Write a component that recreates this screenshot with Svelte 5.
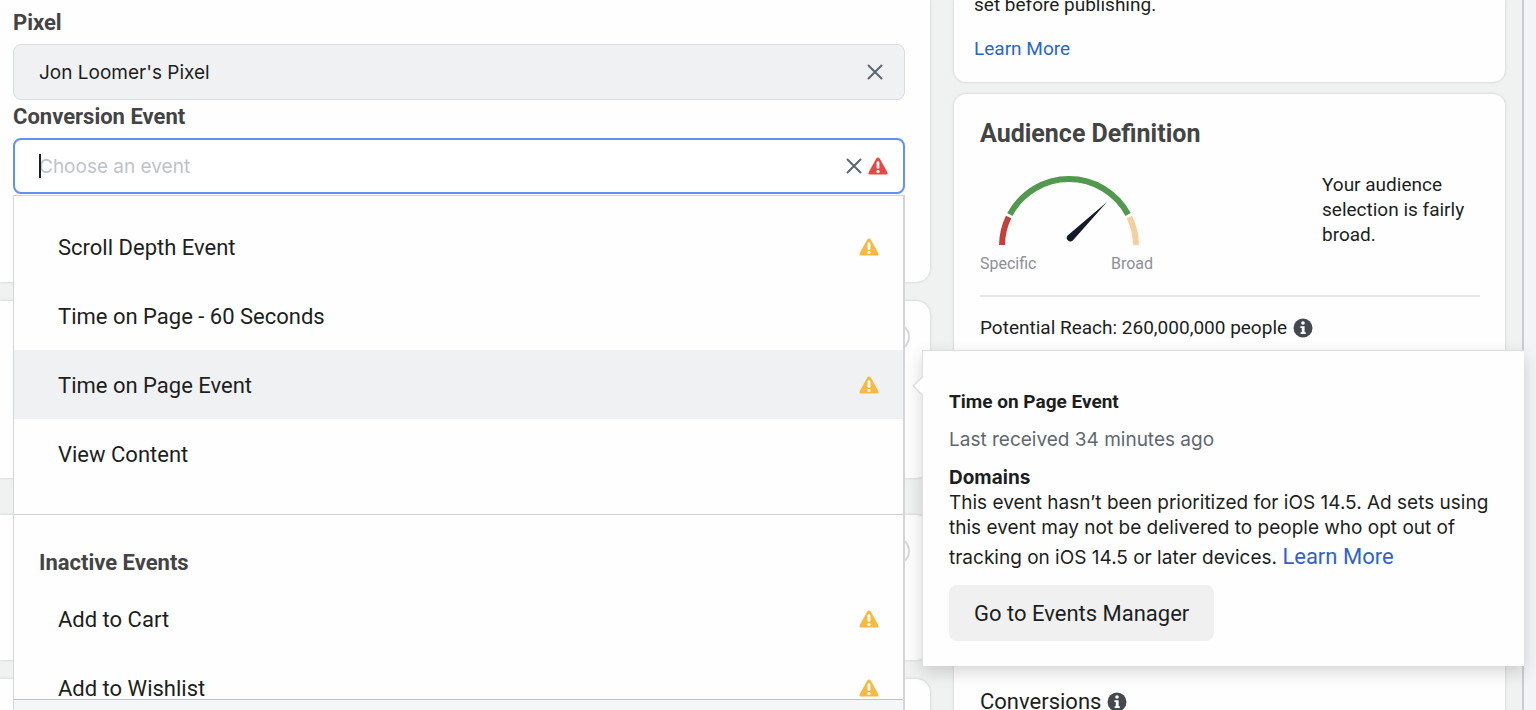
<script>
  const activeEvents = [
    { name: 'Scroll Depth Event', warning: true },
    { name: 'Time on Page - 60 Seconds', warning: false },
    { name: 'Time on Page Event', warning: true },
    { name: 'View Content', warning: false }
  ];
  const inactiveEvents = [
    { name: 'Add to Cart', warning: true },
    { name: 'Add to Wishlist', warning: true }
  ];
  let highlighted = $state('Time on Page Event');
  let query = $state('');
  let pixel = $state("Jon Loomer's Pixel");
</script>

{#snippet cross()}
  <svg width="16" height="16" viewBox="0 0 16 16" aria-hidden="true">
    <path d="M1.5 1.5 14.5 14.5M14.5 1.5 1.5 14.5" fill="none" stroke="#5f666e" stroke-width="2" stroke-linecap="round" />
  </svg>
{/snippet}

{#snippet alertIcon(color)}
  <svg width="20" height="18" viewBox="0 0 20 18" aria-hidden="true">
    <path d="M8.1 1.7Q10 -.9 11.9 1.7L19.2 14.9Q20.2 17.4 17.9 17.5H2.1Q-.2 17.4 .8 14.9Z" fill={color} />
    <path d="M10 5.7V10.4" stroke="#fff" stroke-width="2.8" stroke-linecap="round" />
    <circle cx="10" cy="14.4" r="1.6" fill="#fff" />
  </svg>
{/snippet}

{#snippet info()}
  <svg width="20" height="20" viewBox="0 0 20 20" aria-hidden="true">
    <circle cx="10" cy="10" r="9.5" fill="#444950" />
    <circle cx="10" cy="5" r="1.8" fill="#fff" />
    <path d="M7.4 8.2H11.6V14.2H12.8V16H7.6V14.2H8.8V10H7.4Z" fill="#fff" />
  </svg>
{/snippet}

{#snippet option(event)}
  <li>
    <button
      class="option"
      class:highlighted={event.name === highlighted}
      onmouseenter={() => (highlighted = event.name)}
    >
      <span>{event.name}</span>
      {#if event.warning}{@render alertIcon('#f7b941')}{/if}
    </button>
  </li>
{/snippet}

<div class="page">
  <main>
    <section class="card conversion">
      <div class="field">
        <label for="pixel">Pixel</label>
        <div class="box filled">
          <input id="pixel" type="text" bind:value={pixel} readonly />
          <button class="clear" aria-label="Clear pixel" onclick={() => (pixel = '')}>{@render cross()}</button>
        </div>
      </div>
      <div class="field">
        <label for="event">Conversion Event</label>
        <div class="combo">
          <div class="box active">
            <span class="caret"></span>
            <input id="event" type="text" placeholder="Choose an event" bind:value={query} />
            <button class="clear" aria-label="Clear event" onclick={() => (query = '')}>{@render cross()}</button>
            {@render alertIcon('#ea4644')}
          </div>

          <div class="menu">
            <div class="scroller">
              <ul class="group">
                {#each activeEvents as event}{@render option(event)}{/each}
              </ul>
              <h3>Inactive Events</h3>
              <ul>
                {#each inactiveEvents as event}{@render option(event)}{/each}
              </ul>
            </div>
            <div class="menu-foot"></div>
          </div>

          <div class="tooltip">
            <svg class="arrow" width="12" height="20" viewBox="0 0 12 20" aria-hidden="true">
              <path d="M12 0 1 10 12 20Z" fill="#fff" />
              <path d="M11 .5 1 10 11 19.5" fill="none" stroke="#dcdee0" stroke-width="1.5" />
            </svg>
            <h4>Time on Page Event</h4>
            <p class="received">Last received 34 minutes ago</p>
            <h5>Domains</h5>
            <p class="detail">
              This event hasn’t been prioritized for iOS 14.5. Ad sets using this event may not be delivered to people
              who opt out of tracking on iOS 14.5 or later devices. <a href="#learn">Learn More</a>
            </p>
            <button class="manager">Go to Events Manager</button>
          </div>
        </div>
      </div>
    </section>
    <section class="card second"><span class="ring"></span></section>
    <section class="card third"><span class="ring"></span></section>
    <section class="card fourth"></section>
  </main>

  <aside>
    <section class="card notice">
      <p>set before publishing.</p>
      <a href="#learn">Learn More</a>
    </section>
    <section class="card audience">
      <h2>Audience Definition</h2>
      <div class="summary">
        <div class="gauge">
          <svg width="173" height="72" viewBox="0 0 173 72" aria-hidden="true">
            <g fill="none" stroke-width="6">
              <path d="M22 70A67 67 0 0 1 28.6 42" stroke="#c2423b" />
              <path d="M29.9 39.5A67 67 0 0 1 148.1 39.5" stroke="#52994f" />
              <path d="M149.4 42A67 67 0 0 1 156 70" stroke="#f6cf9f" />
            </g>
            <path d="M127 27 92.8 65.6A3.7 3.7 0 0 1 87.6 60.4Z" fill="#141b28" />
          </svg>
          <div class="scale"><span>Specific</span><span>Broad</span></div>
        </div>
        <p>Your audience selection is fairly broad.</p>
      </div>
      <p class="reach">Potential Reach: 260,000,000 people {@render info()}</p>
      <p class="conversions">Conversions {@render info()}</p>
    </section>
  </aside>
  <div class="edge"></div>
</div>

<style>
  :global(body) {
    margin: 0;
    overflow: hidden;
  }

  .page {
    display: flex;
    height: 100vh;
    overflow: hidden;
    background: #f0f2f2;
    color: #1c1e21;
    font-family: Roboto, 'Liberation Sans', sans-serif;
    font-size: 19px;
    line-height: 25px;
  }

  .page * {
    box-sizing: border-box;
  }

  h2, h3, h4, h5, p, ul {
    margin: 0;
    padding: 0;
  }

  ul {
    list-style: none;
  }

  button, input {
    border: 0;
    padding: 0;
    background: none;
    color: inherit;
    font: inherit;
  }

  a {
    color: #2d64c9;
    text-decoration: none;
  }

  svg {
    display: block;
    flex: none;
  }

  .card {
    background: #fefefe;
    box-shadow: 0 0 3px rgba(0, 0, 0, 0.18);
  }

  main {
    flex: 1;
    min-width: 0;
    display: flex;
    flex-direction: column;
  }

  main .card {
    flex: none;
    display: flex;
    justify-content: flex-end;
    align-items: flex-start;
    padding: 22px 20px 0 0;
    border-radius: 0 14px 14px 0;
  }

  main .conversion {
    display: block;
    height: 282px;
    padding: 6px 25px 0 13px;
    border-top-right-radius: 0;
  }

  .second {
    height: 177px;
    margin-top: 19px;
  }

  .third {
    height: 145px;
    margin-top: 37px;
  }

  .fourth {
    height: 145px;
    margin-top: 19px;
  }

  .ring {
    width: 28px;
    height: 28px;
    border: 2px solid #d5d7da;
    border-radius: 50%;
  }

  label {
    display: block;
    padding-bottom: 4px;
    color: #444;
    font-size: 22px;
    font-weight: 700;
    line-height: 34px;
  }

  .box {
    display: flex;
    align-items: center;
    gap: 6px;
    height: 56px;
    padding: 0 21px 0 25px;
    border: 1px solid #dadde1;
    border-radius: 8px;
  }

  .box input {
    flex: 1;
    min-width: 0;
    height: 40px;
    outline: none;
    font-family: Inter, sans-serif;
  }

  .box input::placeholder {
    color: #bec3c9;
    opacity: 1;
  }

  .filled {
    background: #f0f1f3;
  }

  .active {
    position: relative;
    padding: 0 15px 0 24px;
    border: 2px solid #6490f5;
    background: #fff;
  }

  .caret {
    position: absolute;
    left: 24px;
    width: 2px;
    height: 24px;
    background: #1c1e21;
  }

  .combo {
    position: relative;
  }

  .menu {
    position: absolute;
    z-index: 1;
    top: 57px;
    left: 0;
    width: 100%;
    border: 1px solid #d3d5d9;
    border-right-width: 2px;
    border-bottom: 0;
    background: #fefefe;
  }

  .scroller {
    height: 504px;
    overflow: hidden;
    border-bottom: 1px solid #bfc2c6;
  }

  .menu-foot {
    height: 16px;
    background: #f5f6f8;
  }

  .group {
    padding: 16px 0 26px;
    border-bottom: 1px solid #cdcfd2;
  }

  .option {
    display: flex;
    align-items: center;
    justify-content: space-between;
    width: 100%;
    height: 69px;
    padding: 0 24px 0 44px;
    font-size: 22px;
    text-align: left;
  }

  .option span {
    padding-top: 2px;
  }

  .highlighted {
    background: #f0f1f3;
  }

  h3 {
    padding: 35px 25px 8px;
    color: #444;
    font-size: 22px;
    line-height: 26px;
  }

  .tooltip {
    position: absolute;
    z-index: 2;
    top: 212px;
    left: calc(100% + 17px);
    width: 602px;
    padding: 38px 26px 25px;
    border: 1px solid #dcdee0;
    border-width: 1px 0 0 1px;
    background: #fefefe;
    box-shadow: 0 6px 16px rgba(0, 0, 0, 0.16);
  }

  .arrow {
    position: absolute;
    top: 25px;
    left: -11px;
  }

  h4 {
    font-size: 19px;
    line-height: 25px;
  }

  .received {
    padding: 13px 0;
    color: #606770;
    font-family: Inter, sans-serif;
  }

  h5 {
    font-family: Inter, sans-serif;
    font-size: 19px;
    line-height: 25px;
  }

  .detail {
    font-family: Inter, sans-serif;
  }

  .detail a {
    font-family: Roboto, sans-serif;
    font-size: 22px;
    line-height: 34px;
  }

  .manager {
    display: block;
    height: 56px;
    margin-top: 11px;
    padding: 0 25px;
    border-radius: 8px;
    background: #f0f0f0;
    font-size: 22px;
  }

  aside {
    flex: none;
    width: 551px;
    margin-left: 24px;
  }

  .notice {
    display: flex;
    flex-direction: column;
    justify-content: flex-end;
    gap: 19px;
    height: 82px;
    padding: 0 20px 21px;
    border-radius: 0 0 12px 12px;
  }

  .audience {
    height: 100vh;
    margin-top: 12px;
    padding: 24px 25px 0 26px;
    border-radius: 12px 12px 0 0;
  }

  h2 {
    color: #444;
    font-size: 25px;
    line-height: 32px;
  }

  .summary {
    display: flex;
    justify-content: space-between;
    height: 147px;
    padding-top: 22px;
    border-bottom: 2px solid #e7e8ea;
  }

  .gauge {
    padding-top: 3px;
  }

  .summary p {
    width: 158px;
  }

  .scale {
    display: flex;
    justify-content: space-between;
    padding-top: 4px;
    color: #8d9095;
    font-size: 16px;
  }

  .reach, .conversions {
    display: flex;
    align-items: center;
    gap: 6px;
  }

  .reach {
    padding-top: 18px;
  }

  .conversions {
    padding-top: 349px;
    font-size: 22px;
  }

  .edge {
    flex: none;
    width: 14px;
    margin-left: 17px;
    border-left: 2px solid #c9ccd0;
    background: #f3f4f7;
  }
</style>
